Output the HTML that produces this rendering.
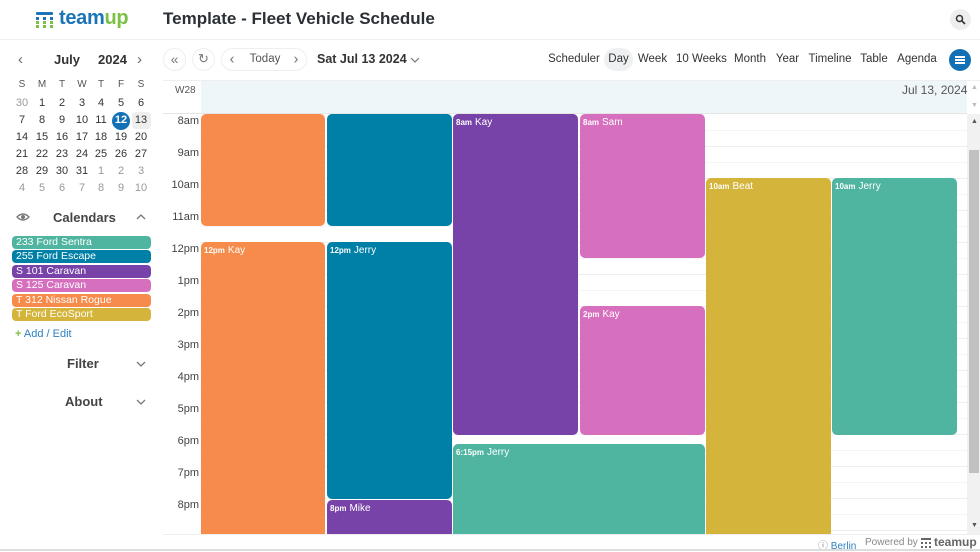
<!DOCTYPE html><html><head><meta charset="utf-8"><style>
*{margin:0;padding:0;box-sizing:border-box}
body{width:980px;height:551px;overflow:hidden;background:#fff;font-family:"Liberation Sans",sans-serif;color:#333;position:relative}
.a{position:absolute}
.t{font-size:11px;color:#444;text-align:right;width:36px;left:163px}
.ev{position:absolute;border-radius:5px;color:#fff;font-size:10px;padding:3px 3px}
.ev b{font-size:8px;margin-right:3px}
.cal{position:absolute;left:12px;width:139px;height:13px;border-radius:4px;color:#fff;font-size:10.5px;padding-left:4px;line-height:13px}
.d{position:absolute;width:20px;text-align:center;font-size:11px;color:#333}
.hl{position:absolute;left:200px;width:767px;height:1px;background:#eee}
.nav{position:absolute;top:59px;font-size:11.5px;color:#333;transform:translateY(-50%);text-align:center;white-space:nowrap}
</style></head><body>
<div class="a" style="left:36px;top:12px;width:17px;height:3px;background:#1c74b8;border-radius:1px"></div>
<svg class="a" style="left:36px;top:17px" width="17" height="11"><g fill="#1c74b8"><rect x="0" y="0" width="3" height="3"/><rect x="7" y="0" width="3" height="3"/><rect x="14" y="0" width="3" height="3"/></g><g fill="#7bc144"><rect x="0" y="4" width="3" height="3"/><rect x="7" y="4" width="3" height="3"/><rect x="14" y="4" width="3" height="3"/><rect x="0" y="8" width="3" height="3"/><rect x="7" y="8" width="3" height="3"/><rect x="14" y="8" width="3" height="3"/></g></svg>
<div class="a" style="left:59px;top:7px;font-size:20px;font-weight:bold;letter-spacing:-0.3px"><span style="color:#1c74b8">team</span><span style="color:#7bc144">up</span></div>
<div class="a" style="left:163px;top:9px;font-size:17px;font-weight:bold;color:#2b3036">Template - Fleet Vehicle Schedule</div>
<div class="a" style="left:950px;top:9px;width:21px;height:21px;border-radius:50%;background:#eee"></div>
<svg class="a" style="left:955px;top:14px" width="11" height="11"><circle cx="4.5" cy="4.5" r="3" fill="none" stroke="#333" stroke-width="1.5"/><path d="M7 7l3 3" stroke="#333" stroke-width="1.6"/></svg>
<div class="a" style="left:0;top:39px;width:980px;height:1px;background:#f0f0f0"></div>
<div class="a" style="left:18px;top:51px;font-size:15px;color:#666">‹</div>
<div class="a" style="left:54px;top:52px;font-size:13px;font-weight:bold;color:#333">July</div>
<div class="a" style="left:98px;top:52px;font-size:13px;font-weight:bold;color:#333">2024</div>
<div class="a" style="left:137px;top:51px;font-size:15px;color:#666">›</div>
<div class="a" style="left:112px;top:112px;width:18px;height:18px;border-radius:50%;background:#1370b5;"></div>
<div class="a" style="left:132px;top:112px;width:19px;height:17px;border-radius:4px;background:#eee"></div>
<div id="mc"></div>
<script>
var h='',xs=[22,42,62,82,101,121,141],days=['S','M','T','W','T','F','S'];
days.forEach(function(d,i){h+='<div class="d" style="left:'+(xs[i]-10)+'px;top:79px;font-size:10px;color:#555">'+d+'</div>'});
var all=[30];for(var i=1;i<=31;i++)all.push(i);for(i=1;i<=10;i++)all.push(i);
all.forEach(function(v,k){var r=Math.floor(k/7),c=k%7;var grey=(k==0||k>31);var col=grey?'#999':'#333';if(k==12)col='#fff;font-weight:bold';
h+='<div class="d" style="left:'+(xs[c]-10)+'px;top:'+(97+r*17)+'px;color:'+col+'">'+v+'</div>'});
document.getElementById('mc').innerHTML=h;
</script>
<svg class="a" style="left:16px;top:212px" width="14" height="10"><path d="M1 5Q7 -1 13 5Q7 11 1 5Z" fill="none" stroke="#777" stroke-width="1.3"/><circle cx="7" cy="5" r="2" fill="#777"/></svg>
<div class="a" style="left:53px;top:210px;font-size:13px;font-weight:bold;color:#444">Calendars</div>
<svg class="a" style="left:136px;top:213px" width="10" height="7"><path d="M1 6L5 2L9 6" fill="none" stroke="#777" stroke-width="1.3"/></svg>
<div class="cal" style="top:236px;background:#4fb5a0">233 Ford Sentra</div>
<div class="cal" style="top:250px;background:#0080a6">255 Ford Escape</div>
<div class="cal" style="top:265px;background:#7843a8">S 101 Caravan</div>
<div class="cal" style="top:279px;background:#d76fbf">S 125 Caravan</div>
<div class="cal" style="top:294px;background:#f68b4b">T 312 Nissan Rogue</div>
<div class="cal" style="top:308px;background:#d4b43a">T Ford EcoSport</div>
<div class="a" style="left:15px;top:328px;font-size:11px;color:#2c7fc0"><span style="color:#7bc144;font-weight:bold">+</span> Add / Edit</div>
<div class="a" style="left:67px;top:356px;font-size:13px;font-weight:bold;color:#444">Filter</div>
<svg class="a" style="left:136px;top:361px" width="10" height="7"><path d="M1 1L5 5L9 1" fill="none" stroke="#777" stroke-width="1.3"/></svg>
<div class="a" style="left:65px;top:394px;font-size:13px;font-weight:bold;color:#444">About</div>
<svg class="a" style="left:136px;top:399px" width="10" height="7"><path d="M1 1L5 5L9 1" fill="none" stroke="#777" stroke-width="1.3"/></svg>
<div class="a" style="left:163px;top:48px;width:23px;height:23px;border-radius:50%;border:1px solid #eee"></div>
<div class="nav" style="left:163px;width:23px;color:#777;font-size:14px">«</div>
<div class="a" style="left:192px;top:48px;width:23px;height:23px;border-radius:50%;border:1px solid #eee"></div>
<div class="nav" style="left:192px;width:23px;color:#777;font-size:13px">↻</div>
<div class="a" style="left:221px;top:48px;width:86px;height:23px;border-radius:12px;border:1px solid #eee"></div>
<div class="nav" style="left:226px;width:12px;color:#777;font-size:15px">‹</div>
<div class="nav" style="left:245px;width:40px;color:#555">Today</div>
<div class="nav" style="left:290px;width:12px;color:#777;font-size:15px">›</div>
<div class="nav" style="left:317px;font-weight:bold;font-size:12.5px;color:#333">Sat Jul 13 2024</div>
<svg class="a" style="left:410px;top:57px" width="10" height="6"><path d="M1 1L5 5L9 1" fill="none" stroke="#777" stroke-width="1.2"/></svg>
<div class="a" style="left:604px;top:48px;width:29px;height:23px;border-radius:12px;background:#eef0f2"></div>
<div class="nav" style="left:548px;width:52px">Scheduler</div>
<div class="nav" style="left:604px;width:29px">Day</div>
<div class="nav" style="left:637px;width:31px">Week</div>
<div class="nav" style="left:676px;width:49px">10 Weeks</div>
<div class="nav" style="left:733px;width:34px">Month</div>
<div class="nav" style="left:775px;width:25px">Year</div>
<div class="nav" style="left:808px;width:44px">Timeline</div>
<div class="nav" style="left:859px;width:30px">Table</div>
<div class="nav" style="left:897px;width:40px">Agenda</div>
<div class="a" style="left:949px;top:49px;width:22px;height:22px;border-radius:50%;background:#1370b5"></div>
<div class="a" style="left:955px;top:56px;width:10px;height:1.5px;background:#fff;box-shadow:0 3px #fff,0 6px #fff"></div>
<div class="a" style="left:163px;top:80px;width:817px;height:1px;background:#eee"></div>
<div class="a" style="left:201px;top:81px;width:766px;height:32px;background:#eef6f9"></div>
<div class="a" style="left:175px;top:85px;font-size:10px;color:#555">W28</div>
<div class="a" style="left:902px;top:83px;font-size:12px;color:#555">Jul 13, 2024</div>
<div class="a" style="left:163px;top:113px;width:804px;height:1px;background:#e4e4e4"></div>
<div id="gr"></div>
<script>
var g='',lab=['8am','9am','10am','11am','12pm','1pm','2pm','3pm','4pm','5pm','6pm','7pm','8pm'];
for(var i=0;i<13;i++){var y=114+i*32;g+='<div class="a t" style="top:'+(y+1)+'px">'+lab[i]+'</div><div class="hl" style="top:'+(y+32)+'px"></div><div class="hl" style="top:'+(y+16)+'px;background:#f5f5f5"></div>';}
document.getElementById('gr').innerHTML=g;
</script>
<div class="ev" style="left:201px;top:114px;width:124px;height:112px;background:#f68b4b"></div>
<div class="ev" style="left:201px;top:242px;width:124px;height:292px;background:#f68b4b;border-radius:5px 5px 0 0"><b>12pm</b>Kay</div>
<div class="ev" style="left:327px;top:114px;width:125px;height:112px;background:#0080a6"></div>
<div class="ev" style="left:327px;top:242px;width:125px;height:257px;background:#0080a6"><b>12pm</b>Jerry</div>
<div class="ev" style="left:327px;top:500px;width:125px;height:34px;background:#7843a8;border-radius:5px 5px 0 0"><b>8pm</b>Mike</div>
<div class="ev" style="left:453px;top:114px;width:125px;height:321px;background:#7843a8"><b>8am</b>Kay</div>
<div class="ev" style="left:580px;top:114px;width:125px;height:144px;background:#d76fbf"><b>8am</b>Sam</div>
<div class="ev" style="left:580px;top:306px;width:125px;height:129px;background:#d76fbf"><b>2pm</b>Kay</div>
<div class="ev" style="left:453px;top:444px;width:252px;height:90px;background:#4fb5a0;border-radius:5px 5px 0 0"><b>6:15pm</b>Jerry</div>
<div class="ev" style="left:706px;top:178px;width:125px;height:356px;background:#d4b43a;border-radius:5px 5px 0 0"><b>10am</b>Beat</div>
<div class="ev" style="left:832px;top:178px;width:125px;height:257px;background:#4fb5a0"><b>10am</b>Jerry</div>
<div class="a" style="left:967px;top:114px;width:13px;height:420px;background:#f1f1f1"></div>
<div class="a" style="left:969px;top:150px;width:10px;height:323px;background:#c1c1c1"></div>
<div class="a" style="left:971px;top:118px;font-size:7px;color:#555">▲</div>
<div class="a" style="left:971px;top:522px;font-size:7px;color:#555">▼</div>
<div class="a" style="left:971px;top:84px;font-size:7px;color:#bbb">▲</div>
<div class="a" style="left:971px;top:102px;font-size:7px;color:#bbb">▼</div>
<div class="a" style="left:163px;top:534px;width:817px;height:1px;background:#eee"></div>
<div class="a" style="left:818px;top:537px;font-size:10px;color:#888">ⓘ <span style="color:#2c7fc0">Berlin</span></div>
<div class="a" style="left:865px;top:537px;font-size:10px;color:#888">Powered by</div>
<svg class="a" style="left:921px;top:538px" width="10" height="10"><rect width="10" height="2" fill="#666"/><g fill="#666"><rect y="4" width="2" height="2"/><rect x="4" y="4" width="2" height="2"/><rect x="8" y="4" width="2" height="2"/><rect y="8" width="2" height="2"/><rect x="4" y="8" width="2" height="2"/><rect x="8" y="8" width="2" height="2"/></g></svg>
<div class="a" style="left:934px;top:535px;font-size:12px;font-weight:bold;color:#666">teamup</div>
<div class="a" style="left:0;top:549px;width:980px;height:2px;background:#ddd"></div>
</body></html>
